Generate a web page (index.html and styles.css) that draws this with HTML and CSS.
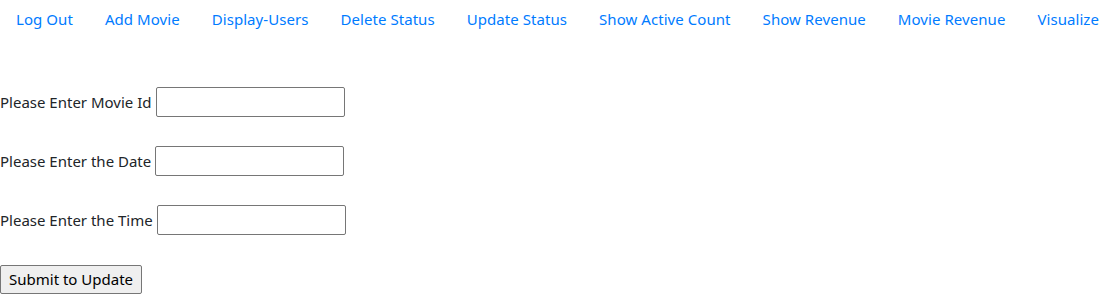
FILE: index.html
```html
<!DOCTYPE html>
<html lang="en">
<head>
    <meta charset="UTF-8">
    <meta name="viewport" content="width=device-width, initial-scale=1.0">
    <title>Update Status</title>
    <link rel="stylesheet" href="styles.css">
</head>
<body>
    <ul class="nav">
        <li><a class="nav-link" href="#">Log Out</a></li>
        <li><a class="nav-link" href="#">Add Movie</a></li>
        <li><a class="nav-link" href="#">Display-Users</a></li>
        <li><a class="nav-link" href="#">Delete Status</a></li>
        <li><a class="nav-link" href="#">Update Status</a></li>
        <li><a class="nav-link" href="#">Show Active Count</a></li>
        <li><a class="nav-link" href="#">Show Revenue</a></li>
        <li><a class="nav-link" href="#">Movie Revenue</a></li>
        <li><a class="nav-link" href="#">Visualize</a></li>
    </ul>

    <form class="update-form">
        <div class="form-row">
            <label for="movieId">Please Enter Movie Id</label>
            <input type="text" id="movieId" class="field">
        </div>
        <div class="form-row">
            <label for="showDate">Please Enter the Date</label>
            <input type="text" id="showDate" class="field">
        </div>
        <div class="form-row">
            <label for="showTime">Please Enter the Time</label>
            <input type="text" id="showTime" class="field">
        </div>
        <div class="form-row">
            <button type="submit" class="submit-btn">Submit to Update</button>
        </div>
    </form>
</body>
</html>
```

FILE: styles.css
```css
body {
    margin: 0;
    font-family: "Noto Sans", "Open Sans", sans-serif;
    font-size: 15px;
    line-height: 24px;
    color: #212529;
    background: #fff;
}
.nav {
    display: flex;
    flex-wrap: nowrap;
    list-style: none;
    margin: 0;
    padding: 0;
}
.nav-link {
    display: block;
    padding: 7px 16px 9px;
    color: #007bff;
    text-decoration: none;
    white-space: nowrap;
    letter-spacing: 0.06px;
}
.update-form {
    padding-top: 47px;
}
.form-row {
    display: flex;
    align-items: center;
    gap: 4px;
    height: 30px;
    margin-bottom: 29px;
}
.form-row:last-child {
    margin-bottom: 0;
}
.form-row label {
    white-space: nowrap;
}
.field {
    width: 189px;
    height: 30px;
    box-sizing: border-box;
    border: 1px solid #767676;
    border-radius: 2px;
    padding: 1px 2px;
    font: inherit;
}
.submit-btn {
    height: 29px;
    padding: 1px 8px;
    font: inherit;
    color: #000;
    background: #efefef;
    border: 1px solid #767676;
    border-radius: 2px;
}
```
